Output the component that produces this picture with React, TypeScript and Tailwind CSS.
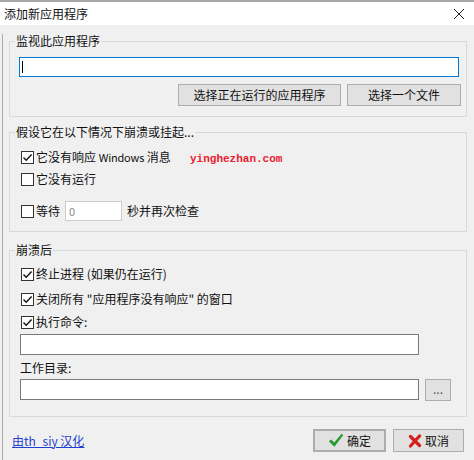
import React from "react";

const font = "font-['Noto_Sans_CJK_SC','Noto_Sans',sans-serif]";

const Tick = () => (
  <svg width="11" height="11" viewBox="0 0 11 11">
    <path d="M1.5 5.5 L4.2 8.2 L9.6 2.6" fill="none" stroke="#111" strokeWidth="1.4" />
  </svg>
);

const CheckBox = ({ checked, label }: { checked?: boolean; label: React.ReactNode }) => (
  <div className="flex items-center h-[16px] ml-[11px] gap-[2px] text-[12px] leading-[16px] text-[#111]">
    <span className="w-[13px] h-[13px] border border-[#333] bg-white flex items-center justify-center">
      {checked && <Tick />}
    </span>
    <span>{label}</span>
  </div>
);

const Group = ({ title, className, children }: { title: string; className?: string; children: React.ReactNode }) => (
  <fieldset className={`ml-[6px] w-[458px] border border-[#d9d9d9] ${className ?? ""}`}>
    <legend className="ml-[5px] px-[1px] text-[12px] leading-[14px] text-[#111]">{title}</legend>
    {children}
  </fieldset>
);

const Field = ({ className }: { className?: string }) => (
  <div className={`h-[21px] bg-white border border-[#7a7a7a] ${className ?? ""}`} />
);

const Button = ({ className, children }: { className?: string; children: React.ReactNode }) => (
  <div
    className={`h-[22px] bg-[#e1e1e1] border border-[#adadad] flex items-center justify-center text-[12px] leading-[14px] text-[#111] ${className ?? ""}`}
  >
    {children}
  </div>
);

export default function App() {
  return (
    <div className={`relative w-[474px] h-[460px] bg-[#f0f0f0] border-t-2 border-[#a8a8a8] overflow-hidden ${font}`}>
      {/* title bar */}
      <div className="h-[23px] bg-white flex items-center justify-between pl-[4px] pr-[9px]">
        <span className="text-[12px] leading-[23px] text-[#111]">添加新应用程序</span>
        <svg width="12" height="12" viewBox="0 0 12 12">
          <path d="M1 1 L11 11 M11 1 L1 11" stroke="#222" strokeWidth="1" />
        </svg>
      </div>

      <div className="ml-[2px] border-l border-[#acacac] h-[435px]">
        <Group title="监视此应用程序" className="mt-[9px] pb-[10px]">
          <div className="mt-[9px] ml-[9px] w-[440px] h-[20px] bg-white border border-[#0078d7] flex items-center">
            <span className="ml-[2px] w-[1px] h-[12px] bg-black" />
          </div>
          <div className="mt-[7px] flex justify-end gap-[6px] pr-[5px]">
            <Button className="w-[163px]">选择正在运行的应用程序</Button>
            <Button className="w-[114px]">选择一个文件</Button>
          </div>
        </Group>

        <Group title="假设它在以下情况下崩溃或挂起..." className="mt-[8px] pb-[10px]">
          <div className="mt-[10px]">
            <CheckBox
              checked
              label={
                <>
                  它没有响应 <span className="text-[11px] tracking-[-0.2px]">Windows</span> 消息
                </>
              }
            />
          </div>
          <div className="mt-[6px]">
            <CheckBox label="它没有运行" />
          </div>
          <div className="mt-[14px] flex items-center h-[20px]">
            <CheckBox label="等待" />
            <div className="ml-[5px] w-[57px] h-[20px] bg-white border border-[#cccccc] flex items-center pl-[3px] text-[11px] text-[#8a8a8a]">
              0
            </div>
            <span className="ml-[5px] text-[12px] leading-[16px] text-[#111]">秒并再次检查</span>
          </div>
        </Group>

        <Group title="崩溃后" className="mt-[11px] pb-[15px]">
          <div className="mt-[9px]">
            <CheckBox checked label="终止进程 (如果仍在运行)" />
          </div>
          <div className="mt-[9px]">
            <CheckBox checked label='关闭所有 "应用程序没有响应" 的窗口' />
          </div>
          <div className="mt-[7px]">
            <CheckBox checked label="执行命令:" />
          </div>
          <Field className="mt-[4px] ml-[10px] w-[399px]" />
          <div className="mt-[6px] ml-[10px] text-[12px] leading-[14px] text-[#111]">工作目录:</div>
          <div className="mt-[4px] ml-[10px] flex gap-[6px]">
            <Field className="w-[399px]" />
            <Button className="w-[26px] h-[21px] text-[10px] text-[#555] pb-[3px]">...</Button>
          </div>
        </Group>

        {/* footer */}
        <div className="mt-[12px] flex items-center pl-[9px] pr-[10px]">
          <span className="text-[12px] leading-[14px] text-[#1f3fcf] underline">由th_siy 汉化</span>
          <div className="ml-auto flex gap-[7px]">
            <Button className="w-[73px] h-[23px] border-2 border-[#0078d7] gap-[3px]">
              <svg width="16" height="15" viewBox="0 0 16 15">
                <path d="M0.8 8.2 L3.2 6.4 L6.2 9.6 L13.6 0.8 L15.2 2.2 L6.4 13.8 Z" fill="#2a9a2f" />
              </svg>
              <span>确定</span>
            </Button>
            <Button className="w-[71px] h-[23px] gap-[3px]">
              <svg width="14" height="14" viewBox="0 0 14 14">
                <path d="M2.5 2.5 L11.5 11.5 M11.5 2 L2.5 12" stroke="#d3201c" strokeWidth="3.2" strokeLinecap="round" />
              </svg>
              <span>取消</span>
            </Button>
          </div>
        </div>
      </div>

      {/* site watermark */}
      <span className="absolute left-[190px] top-[151px] font-['Liberation_Mono',monospace] font-bold text-[11px] leading-[13px] text-[#e8202f]">
        yinghezhan.com
      </span>
    </div>
  );
}
